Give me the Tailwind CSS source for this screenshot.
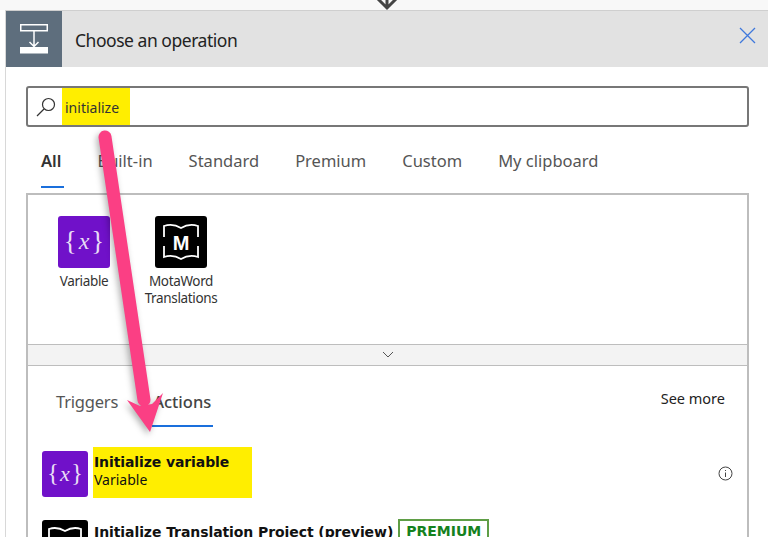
<!DOCTYPE html>
<html>
<head>
<meta charset="utf-8">
<script src="https://cdn.jsdelivr.net/npm/@tailwindcss/browser@4"></script>
</head>
<body class="m-0 bg-white">
<div class="relative w-[768px] h-[537px] overflow-hidden bg-white font-['Noto_Sans',sans-serif] text-[#323130]">
  <!-- canvas strip -->
  <div class="h-[10px] bg-[#f8f8f8] relative">
    <svg class="absolute left-[375px] top-[-6px] z-10" width="24" height="18" viewBox="0 0 24 18" fill="none" stroke="#444" stroke-width="3"><path d="M12 0V14M3 5L12 14L21 5"/></svg>
  </div>
  <div class="ml-[5px] border-l border-[#d8d8d8] h-[527px]">
    <!-- header -->
    <div class="flex items-center h-[57px] bg-[#e2e2e2] border-t border-[#cfcfcf]">
      <div class="w-[56px] h-full bg-[#5e6e7d] flex items-center justify-center">
        <svg width="30" height="32" viewBox="0 0 30 32" fill="none" stroke="#fff" stroke-width="1.5"><rect x="1.75" y="1.75" width="26.5" height="6"/><path d="M15 8V23M10.5 19L15 23.5L19.5 19"/><rect x="1" y="24" width="28" height="6.5" fill="#fff" stroke="none"/></svg>
      </div>
      <div class="ml-[13px] mt-[3px] text-[17.5px] tracking-[-0.47px] text-[#222] leading-none">Choose an operation</div>
      <svg class="ml-auto mr-[12px] mt-[-8px]" width="17" height="17" viewBox="0 0 17 17" fill="none" stroke="#3f78dc" stroke-width="1.3"><path d="M1 1L16 16M16 1L1 16"/></svg>
    </div>
    <div class="px-[20px] pt-[19px]">
      <!-- search -->
      <div class="flex items-center h-[41px] w-[723px] border-2 border-[#777] rounded-[3px] bg-white pl-[8px]">
        <svg width="20" height="20" viewBox="0 0 20 20" fill="none" stroke="#333" stroke-width="1.2"><circle cx="12.5" cy="7.5" r="6"/><path d="M8 12L1 19"/></svg>
        <div class="ml-[6px] h-[37px] w-[68px] -mt-[1px] bg-[#ffee00] flex items-center pl-[3px] pt-[3px] text-[14px] text-[#333]">initialize</div>
      </div>
      <!-- tabs -->
      <div class="relative flex items-start gap-[36px] h-[66px] pt-[22px] pl-[15px] text-[16.5px] leading-[24px] text-[#555]">
        <div class="font-semibold text-[#333]">All</div>
        <div>Built-in</div><div>Standard</div><div>Premium</div><div>Custom</div><div>My clipboard</div>
        <div class="absolute left-[15px] top-[59px] w-[23px] h-[2px] bg-[#1a6fdc]"></div>
      </div>
      <!-- card -->
      <div class="w-[723px] h-[360px] border-x-2 border-t-2 border-[#bdbdbd] bg-white">
        <div class="h-[149px] flex items-start pt-[21px] pl-[14px] gap-[13px]">
          <div class="w-[84px] flex flex-col items-center text-[13.5px] tracking-[-0.35px] leading-[17px] text-[#333]">
            <div class="w-[52px] h-[52px] rounded-[3px] bg-[#7011c9] flex items-center justify-center text-[#e8dcf5] text-[27px] tracking-normal font-['Liberation_Serif',serif] font-light pb-[2px]">{<i class="mx-[2px] text-[24px]">x</i>}</div>
            <div class="mt-[5px]">Variable</div>
          </div>
          <div class="w-[84px] flex flex-col items-center text-center text-[13.5px] tracking-[-0.35px] leading-[17px] text-[#333]">
            <div class="w-[52px] h-[52px] rounded-[3px] bg-black flex items-center justify-center">
              <svg width="40" height="40" viewBox="0 0 40 40" fill="none" stroke="#fff" stroke-width="1.8"><path d="M3 15V4C9 2 15 3 20 6C25 3 31 2 37 4V15M3 24V35C9 33 15 34 20 37C25 34 31 33 37 35V24"/><text x="20" y="27.5" text-anchor="middle" fill="#fff" stroke="none" font-family="Liberation Sans" font-weight="700" font-size="20">M</text></svg>
            </div>
            <div class="mt-[5px]">MotaWord<br>Translations</div>
          </div>
        </div>
        <div class="h-[22px] bg-[#f3f3f3] border-y border-[#bdbdbd] flex items-center justify-center">
          <svg width="12" height="8" viewBox="0 0 12 8" fill="none" stroke="#555" stroke-width="1"><path d="M1 1L6 6L11 1"/></svg>
        </div>
        <!-- sub tabs -->
        <div class="relative h-[81px] flex items-start pl-[28px] pt-[24px] text-[16.5px] leading-[24px]">
          <div class="text-[#555] tracking-[-0.2px]">Triggers</div>
          <div class="ml-[35px] w-[73px] font-medium text-[#444]">Actions</div>
          <div class="absolute left-[124px] top-[59px] w-[61px] h-[2px] bg-[#1a6fdc]"></div>
          <div class="absolute right-[22px] top-[20px] text-[14.5px] text-[#222]">See more</div>
        </div>
        <!-- rows -->
        <div class="relative flex items-start pl-[14px] h-[73px]">
          <div class="mt-[4px] w-[46px] h-[46px] rounded-[3px] bg-[#7011c9] flex items-center justify-center text-[#e8dcf5] text-[25px] font-['Liberation_Serif',serif] font-light pb-[2px]">{<i class="mx-[1px] text-[22px]">x</i>}</div>
          <div class="ml-[5px] w-[159px] h-[51px] bg-[#ffee00] pl-[1px] pt-[6px] text-[#111]">
            <div class="font-['DejaVu_Sans',sans-serif] font-bold text-[14px] leading-[18px] tracking-[-0.1px]">Initialize variable</div>
            <div class="text-[14px] leading-[20px] -mt-[1px]">Variable</div>
          </div>
          <svg class="absolute right-[14px] top-[19px]" width="15" height="15" viewBox="0 0 15 15" fill="none" stroke="#444" stroke-width="1"><circle cx="7.5" cy="7.5" r="6.5"/><path d="M7.5 6.5V11M7.5 4V5"/></svg>
        </div>
        <div class="flex items-start pl-[14px]">
          <div class="w-[46px] h-[46px] rounded-[3px] bg-black flex items-start justify-center pt-[5px]">
            <svg width="36" height="14" viewBox="0 0 36 14" fill="none" stroke="#fff" stroke-width="1.8"><path d="M2 14V4C8 2 13 3 18 6C23 3 28 2 34 4V14"/></svg>
          </div>
          <div class="ml-[6px] mt-[2px] font-['DejaVu_Sans',sans-serif] font-bold text-[14px] leading-[20px] tracking-[-0.08px] text-[#111] whitespace-nowrap flex items-start">Initialize Translation Project (preview)
            <span class="ml-[5px] -mt-[3px] px-[6px] border-2 border-[#5f9e46] text-[#15821e] tracking-normal">PREMIUM</span>
          </div>
        </div>
      </div>
    </div>
  </div>
  <!-- annotation arrow -->
  <svg class="absolute left-0 top-0 pointer-events-none" width="768" height="537" viewBox="0 0 768 537" fill="none">
    <g class="drop-shadow-[-2px_3px_3px_rgba(0,0,0,0.3)]">
      <path d="M105 137L144 400" stroke="#fb3f84" stroke-width="13" stroke-linecap="round"/>
      <path d="M127 400L140 406L152 404L163 393L150 432Z" fill="#fb3f84"/>
    </g>
  </svg>
</div>
</body>
</html>
